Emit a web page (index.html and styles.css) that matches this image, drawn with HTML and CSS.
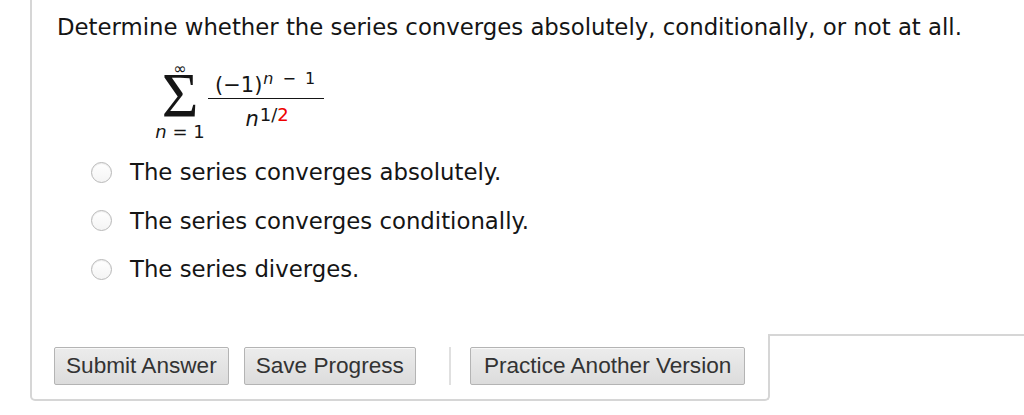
FILE: index.html
```html
<!DOCTYPE html>
<html>
<head>
  <meta charset="UTF-8">
  <title>Series Question</title>
  <link rel="stylesheet" href="styles.css">
</head>
<body>

  <div class="panel">
    <div class="question">
      <p class="prompt">Determine whether the series converges absolutely, conditionally, or not at all.</p>

      <div class="formula">
        <div class="sum">
          <span class="limit-top">&infin;</span>
          <span class="sigma">&Sigma;</span>
          <span class="limit-bottom"><i>n</i> = 1</span>
        </div>
        <div class="frac">
          <span class="num">(&minus;1)<sup><i>n</i> &minus; 1</sup></span>
          <span class="den"><i>n</i><sup>1/<span class="red">2</span></sup></span>
        </div>
      </div>

      <ul class="choices">
        <li><span class="radio"></span>The series converges absolutely.</li>
        <li><span class="radio"></span>The series converges conditionally.</li>
        <li><span class="radio"></span>The series diverges.</li>
      </ul>
    </div>

    <div class="actions-row">
      <div class="actions">
        <button>Submit Answer</button>
        <button>Save Progress</button>
        <span class="divider"></span>
        <button class="wide">Practice Another Version</button>
      </div>
      <div class="filler"></div>
    </div>
  </div>

</body>
</html>
```

FILE: styles.css
```css
body {
  margin: 0;
  background: #fff;
  font-family: "DejaVu Sans", Verdana, sans-serif;
  color: #151515;
}

.panel {
  margin-left: 30px;
}

.question {
  border-left: 2px solid #d6d6d6;
  padding: 12px 0 0 25px;
  height: 334px;
  box-sizing: border-box;
}

.prompt {
  margin: 0;
  font-size: 22.8px;
  line-height: 30px;
}

/* formula */
.formula {
  display: flex;
  align-items: flex-start;
  height: 80px;
  margin: 20px 0 0 95px;
}

.sum {
  display: flex;
  flex-direction: column;
  align-items: center;
  width: 56px;
}

.limit-top {
  font-size: 16px;
  line-height: 14px;
}

.sigma {
  font-family: "Liberation Serif", "Times New Roman", serif;
  font-size: 63px;
  line-height: 41px;
}

.limit-bottom {
  font-size: 18px;
  line-height: 20px;
  margin-top: 5px;
}

.frac {
  display: flex;
  flex-direction: column;
  align-items: center;
  margin: 10px 0 0 0;
  font-size: 21px;
}

.frac sup {
  line-height: 0;
}

.num {
  line-height: 26px;
  padding: 0 9px 0 7px;
  border-bottom: 1px solid #151515;
}

.num sup {
  font-size: 16px;
  vertical-align: 8px;
  word-spacing: 4px;
  margin-left: 1px;
}

.den {
  line-height: 28px;
  padding-top: 6px;
  margin-left: 2px;
}

.den sup {
  font-size: 18px;
  vertical-align: 5px;
  margin-left: 1px;
}

.red {
  color: #e00;
}

/* choices */
.choices {
  list-style: none;
  margin: 6px 0 0 34px;
  padding: 0;
}

.choices li {
  display: flex;
  align-items: center;
  height: 48.5px;
  font-size: 22.8px;
}

.radio {
  width: 21px;
  height: 21px;
  border-radius: 50%;
  border: 1px solid #b8b8b8;
  background: linear-gradient(#fff, #f4f4f4);
  box-shadow: inset 0 1px 1px rgba(0,0,0,0.08);
  margin-right: 18px;
  box-sizing: border-box;
}

/* button bar */
.actions-row {
  display: flex;
}

.actions {
  display: flex;
  align-items: center;
  gap: 15px;
  width: 740px;
  box-sizing: border-box;
  padding: 13px 22px 14px;
  border: 2px solid #d6d6d6;
  border-top: none;
  border-radius: 0 0 5px 5px;
}

.filler {
  flex: 1;
  border-top: 2px solid #d6d6d6;
}

.actions button {
  font-family: "Liberation Sans", Arial, sans-serif;
  font-size: 22.6px;
  color: #333;
  white-space: nowrap;
  height: 38px;
  padding: 0 11px;
  border: 1px solid #b4b4b4;
  border-radius: 2px;
  background: linear-gradient(#ececec, #dcdcdc);
  box-shadow: inset 0 1px 0 #f8f8f8;
}

.actions button.wide {
  padding: 0 13px;
}

.divider {
  width: 2px;
  height: 38px;
  background: #e0e0e0;
  margin: 0 4px 0 18px;
}
```
